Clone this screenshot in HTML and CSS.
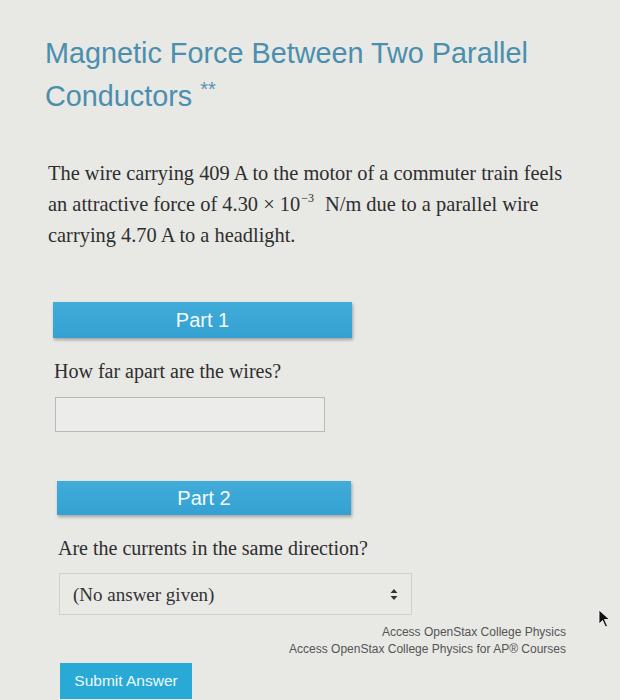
FILE: index.html
```html
<!DOCTYPE html>
<html>
<head>
<meta charset="utf-8">
<link rel="stylesheet" href="styles.css">
</head>
<body>
<div class="page">
  <h1 class="title">Magnetic Force Between Two Parallel Conductors <span class="stars">**</span></h1>
  <p class="problem">The wire carrying 409 A to the motor of a commuter train feels an attractive force of 4.30 &times; 10<sup>&minus;3</sup> N/m due to a parallel wire carrying 4.70 A to a headlight.</p>

  <section class="part part-one">
    <div class="part-bar">Part 1</div>
    <p class="question">How far apart are the wires?</p>
    <div class="answer-input"></div>
  </section>

  <section class="part part-two">
    <div class="part-bar">Part 2</div>
    <p class="question">Are the currents in the same direction?</p>
    <div class="answer-select">
      <span>(No answer given)</span>
      <svg class="updown" width="8" height="11" viewBox="0 0 8 11"><path d="M4 0 L7.5 4 L0.5 4 Z M4 11 L7.5 7 L0.5 7 Z" fill="#333"/></svg>
    </div>
  </section>

  <div class="links">
    <div>Access OpenStax College Physics</div>
    <div>Access OpenStax College Physics for AP&reg; Courses</div>
  </div>

  <button class="submit">Submit Answer</button>
</div>
<svg class="cursor" width="14" height="20" viewBox="0 0 14 20"><path d="M1 1 L1 15 L4.5 11.5 L7.5 18 L9.5 17 L6.5 10.5 L11.5 10.5 Z" fill="#111" stroke="#fff" stroke-width="0.8"/></svg>
</body>
</html>
```
FILE: styles.css
```css
html, body {
  margin: 0;
  padding: 0;
  background: #e8e8e5;
  height: 700px;
  overflow: hidden;
}
.page {
  padding: 32px 0 0 45px;
  position: relative;
}
.title {
  margin: 0;
  width: 520px;
  font-family: "Liberation Sans", Arial, sans-serif;
  font-weight: normal;
  font-size: 28.8px;
  line-height: 43px;
  color: #4a8fae;
}
.stars {
  font-size: 20px;
  line-height: 0;
  vertical-align: 10px;
  color: #5a95b1;
}
.problem {
  margin: 40px 0 0 3px;
  width: 526px;
  font-family: "Liberation Serif", "Times New Roman", serif;
  font-size: 20.4px;
  line-height: 31px;
  color: #2e2e2e;
}
.problem sup {
  font-size: 12px;
  line-height: 0;
  vertical-align: 9px;
  margin-left: 1px;
  margin-right: 6px;
}
.part-one {
  margin: 51px 0 0 8px;
}
.part-two {
  margin: 49px 0 0 12px;
}
.part-bar {
  width: 299px;
  height: 36px;
  background: linear-gradient(#42acd9, #33a1d2);
  color: #f4fbff;
  font-family: "Liberation Sans", Arial, sans-serif;
  font-size: 20px;
  line-height: 36px;
  text-align: center;
  box-shadow: 1px 2px 3px rgba(0,0,0,0.3);
}
.part-two .part-bar {
  width: 294px;
  height: 34px;
  line-height: 34px;
}
.question {
  margin: 18px 0 0 1px;
  font-family: "Liberation Serif", "Times New Roman", serif;
  font-size: 20px;
  line-height: 31px;
  color: #2e2e2e;
}
.answer-input {
  margin: 10px 0 0 2px;
  width: 268px;
  height: 33px;
  border: 1px solid #b9b9b7;
  background: #ececea;
}
.answer-select {
  margin: 9px 0 0 2px;
  width: 325px;
  height: 40px;
  border: 1px solid #d0d0ce;
  background: #e9e9e6;
  padding: 0 13px;
  display: flex;
  align-items: center;
  justify-content: space-between;
  font-family: "Liberation Serif", "Times New Roman", serif;
  font-size: 19px;
  color: #333;
}
.answer-select span {
  padding-top: 2px;
}
.links {
  margin: 9px 0 0 0;
  width: 521px;
  text-align: right;
  font-family: "Liberation Sans", Arial, sans-serif;
  font-size: 12px;
  line-height: 17px;
  color: #555;
}
.submit {
  display: block;
  margin: 5px 0 0 15px;
  width: 132px;
  height: 36px;
  border: none;
  padding: 0;
  background: #28a9d6;
  color: #eef9ff;
  font-family: "Liberation Sans", Arial, sans-serif;
  font-size: 15.5px;
}
.cursor {
  position: absolute;
  left: 598px;
  top: 609px;
}
```
